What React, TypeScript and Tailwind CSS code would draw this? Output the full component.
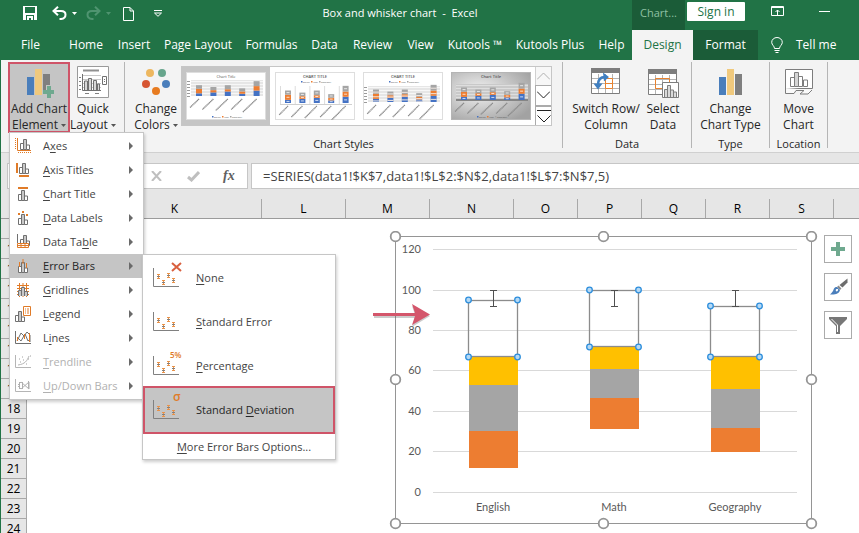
import React from "react";

const UI = "font-['Open_Sans','Noto_Sans',sans-serif]";

function Caret({ className = "" }: { className?: string }) {
  return (
    <svg width="5" height="3" viewBox="0 0 5 3" className={"inline-block align-middle " + className}>
      <path d="M0 0h5L2.500 3z" fill="currentColor" />
    </svg>
  );
}

/* ---------- title bar ---------- */

function TitleBar() {
  return (
    <header className="flex h-[30px] items-center bg-[#217346] text-white">
      <div className="flex w-[168px] shrink-0 items-center pl-[23px]">
        <button aria-label="Save" className="mt-[-4px] w-[14px]">
          <svg width="14" height="14" viewBox="0 0 14 14" className="block">
            <path d="M0 0h14v14H0z" fill="#fff" />
            <path d="M2 1h10v6H2zM3 9h8v5H3z" fill="#217346" />
            <path d="M4 10h6v4H8v-2H6v2H4z" fill="#fff" />
          </svg>
        </button>
        <button aria-label="Undo" className="ml-[15px] mt-[-4px] flex w-[25px] items-center justify-between">
          <svg width="15" height="14" viewBox="0 0 15 14" fill="none" stroke="#fff" strokeWidth="2">
            <path d="M6 0.800 1.500 5 6 9.200M2 5h7c6 0 6 7 0 8H7.500" />
          </svg>
          <Caret />
        </button>
        <button aria-label="Redo" className="ml-[9px] mt-[-4px] flex w-[25px] items-center justify-between text-[#4f9470]">
          <svg width="15" height="14" viewBox="0 0 15 14" fill="none" stroke="currentColor" strokeWidth="2">
            <path d="M9 0.800 13.500 5 9 9.200M13 5H6c-6 0-6 7 0 8h1.500" />
          </svg>
          <Caret />
        </button>
        <button aria-label="New" className="ml-[12px] mt-[-3px]">
          <svg width="11" height="14" viewBox="0 0 11 14" fill="none" stroke="#fff" className="block">
            <path d="M.5.500h6.500l3.500 3.500v9.500H.5zM7 .5V4h3.500" />
          </svg>
        </button>
        <button aria-label="Customize Quick Access Toolbar" className="ml-[20px] mt-[-4px]">
          <svg width="8" height="7" viewBox="0 0 8 7" fill="none" stroke="#fff" className="block">
            <path d="M0 .5h8M.5 3 4 6.300 7.500 3z" />
          </svg>
        </button>
      </div>
      <h1 className="mt-[-4px] flex-1 text-center text-[11px] whitespace-pre">Box and whisker chart  -  Excel</h1>
      <div className="flex h-full w-[53px] items-center justify-center bg-[#1b5c38] pb-1 text-[11px] text-[#8fc0a3]">
        Chart...
      </div>
      <button className="mt-[-7px] ml-[2px] h-[19px] w-[58px] rounded-[1px] bg-white text-xs leading-[19px] text-[#217346]">
        Sign in
      </button>
      <button aria-label="Ribbon display options" className="mt-[-8px] ml-[26px]">
        <svg width="13" height="10" viewBox="0 0 13 10" fill="none" stroke="#fff" className="block">
          <path d="M.5.500h12v9H.5zM0 1.500h13M6.500 9V4M4.500 6l2-2 2 2" />
        </svg>
      </button>
      <button aria-label="Minimize" className="mt-[-7px] mr-[29px] ml-[35px] h-px w-[11px] bg-white" />
    </header>
  );
}

const tabs: [string, string][] = [
  ["File", "w-[61px]"],
  ["Home", "w-[50px]"],
  ["Insert", "w-[46px]"],
  ["Page Layout", "w-[82px]"],
  ["Formulas", "w-[65px]"],
  ["Data", "w-[41px]"],
  ["Review", "w-[55px]"],
  ["View", "w-[41px]"],
  ["Kutools ™", "w-[68px]"],
  ["Kutools Plus", "w-[82px]"],
  ["Help", "w-[41px]"],
  ["Design", "w-[61px] bg-[#f3f3f3] text-[#217346]"],
  ["Format", "w-[65px] bg-[#1b5c38]"],
];

function Tabs() {
  return (
    <nav className="flex h-[30px] bg-[#217346] text-xs text-white">
      {tabs.map(([name, cls]) => (
        <button key={name} className={"shrink-0 whitespace-nowrap " + cls}>
          {name}
        </button>
      ))}
      <button className="ml-[13px] flex items-center gap-[13px] whitespace-nowrap">
        <svg width="12" height="16" viewBox="0 0 12 16" fill="none" stroke="#fff">
          <path d="M3.500 11.500C3.500 9 .7 8 .7 5.300a5.300 4.800 0 0 1 10.600 0C11.300 8 8.500 9 8.500 11.500zM3.500 13.500h5M4.500 15.500h3" />
        </svg>
        Tell me
      </button>
    </nav>
  );
}

/* ---------- ribbon ---------- */

function Columns3({ plus = false }: { plus?: boolean }) {
  return (
    <svg width="30" height="32" viewBox="0 -3 30 32">
      <path d="M3 8h7v18H3z" fill="#4a7ebb" />
      <path d="M11 0h7v26h-7z" fill="#f0c97d" />
      <path d="M19 5h7v21h-7z" fill="#7f7f7f" />
      {plus && (
        <>
          <path d="M22 16h7v5h2v7h-4v2h-7v-3h-2v-6h4z" fill="#c5c5c5" />
          <path d="M23 17h4v4h3v4h-3v4h-4v-4h-4v-4h4z" fill="#6fa98f" />
        </>
      )}
    </svg>
  );
}

function QuickIcon() {
  return (
    <svg width="32" height="32" viewBox="0 0 32 32" fill="none">
      <path d="M.5.500h31v31H.5z" fill="#fff" stroke="#9a9a9a" />
      <path d="M6 4.500h16" stroke="#909090" strokeWidth="2" />
      <path d="M6 9.500h18M6 13.500h18M6 17.500h18M6 21.500h18" stroke="#c9c9c9" />
      <path d="M5.500 8v16.500H24" stroke="#707070" />
      <path d="M7.500 24v-9h3v9M11.500 24V12.500h3V24M16.500 24V14.500h3V24M20.500 24v-6h2v6" fill="#d8d8d8" stroke="#707070" />
      <path d="M2 11.500h2M2 15.500h2M2 19.500h2M2 23.500h2M8 27.500h4M18 27.500h4" stroke="#808080" />
      <path d="M25.500 10.500h4v8h-4z" fill="#fff" stroke="#707070" />
      <path d="M27 13.500h1M27 15.500h1" stroke="#707070" />
    </svg>
  );
}

function ColorsIcon() {
  return (
    <svg width="30" height="32" viewBox="0 -2 30 32">
      <circle cx="9" cy="5" r="4" fill="#edb75f" />
      <circle cx="21" cy="5" r="4" fill="#67a58c" />
      <circle cx="5" cy="16" r="4" fill="#d65532" />
      <circle cx="25" cy="16" r="4" fill="#4a7ebb" />
      <circle cx="15" cy="23" r="4" fill="#e77b20" />
    </svg>
  );
}

function Grid({ orange }: { orange: string }) {
  return (
    <>
      <path d="M1 2h28v23H1z" fill="#fff" />
      <path d="M1 10.500h28M1 15.500h28M1 20.500h28M8.500 6v19M15.500 6v19M22.500 6v19" stroke="#b3b3b3" />
      <path d="M1.500 5v20.500h28V5" stroke="#7d7d7d" />
      <path d="M1 0h29v5H1z" fill="#7d7d7d" />
      <path d={orange} stroke="#e8822e" />
    </>
  );
}

function SwitchIcon() {
  return (
    <svg width="30" height="32" viewBox="1 -2 30 32" fill="none">
      <Grid orange="M15.500 10.500h7v10h-7zM15 15.500h7" />
      <path d="M8 17c0-6 3-8 7-8" stroke="#3f7fc1" strokeWidth="2.500" />
      <path d="m13 4.500 6 4.500-5 4.500zM3.500 15.500l4.500 6 4.500-6z" fill="#3f7fc1" />
    </svg>
  );
}

function SelectIcon() {
  return (
    <svg width="32" height="32" viewBox="0 -3 32 32" fill="none">
      <Grid orange="M8.500 9.500h14v10h-14z" />
      <path d="M15.500 13.500h16v15h-16z" fill="#fff" stroke="#7d7d7d" />
      <path d="M17.500 28v-7.500h3V28M20.500 28V16.500h3V28M23.500 28v-7h3v7M26.500 28v-5h3v5" fill="#dadada" stroke="#7d7d7d" />
    </svg>
  );
}

function MoveIcon() {
  return (
    <svg width="30" height="32" viewBox="0 -3 30 32" fill="none" stroke="#7d7d7d">
      <path d="M1.500.500h27v19h-27z" fill="#fff" />
      <path d="M6.500 17.500v-9h4v9zM14.500 17.500v-10h4v10zM19.500 17.500V11h4v6.500z" fill="#fff" />
      <path d="M10.500 17.500v-14h4v14z" fill="#d5d5d5" />
      <path d="M1.500 19v5.500H10l2-3h8l-4 3.500h8l4-4" fill="#fafafa" />
    </svg>
  );
}

function BigButton(props: { icon: React.ReactNode; a: string; b: string; caret?: boolean; className: string }) {
  return (
    <button className={"flex h-[71px] shrink-0 flex-col items-center whitespace-nowrap " + props.className}>
      <span className="flex h-10 items-center justify-center">{props.icon}</span>
      <span className="block leading-4">{props.a}</span>
      <span className="block leading-4">
        {props.b}
        {props.caret && <Caret className="ml-[3px] text-[#555]" />}
      </span>
    </button>
  );
}

function Group({ label, className, children }: { label?: string; className: string; children: React.ReactNode }) {
  return (
    <section className={"mt-0.5 flex h-[86px] shrink-0 flex-col border-r border-[#b5b5b5] " + className}>
      <div className="flex justify-center">{children}</div>
      {label && <div className="mt-[3px] h-4 text-center text-[11px] leading-4">{label}</div>}
    </section>
  );
}

const bars = [
  [6, 10, 8],
  [8, 5, 7],
  [10, 5, 9],
  [5, 5, 7],
  [12, 10, 11],
];

const labelLengths = [9, 11, 12, 11, 14];

function Thumb({ title, variant }: { title: string; variant: number }) {
  const dark = variant === 3;
  const legendBottom = variant === 0 || dark;
  const base = variant === 0 ? 24 : dark ? 28 : variant === 1 ? 31 : 30;
  const fills = ["#4472c4", "#ed7d31", "#a5a5a5"];
  return (
    <svg width="80" height="48" viewBox="0 0 80 48" className="shrink-0">
      <defs>
        <radialGradient id={"bg" + variant} cx="35%" cy="40%" r="75%">
          <stop offset="0" stopColor={dark ? "#f2f2f2" : "#fff"} />
          <stop offset="1" stopColor={dark ? "#a2a2a2" : "#fff"} />
        </radialGradient>
      </defs>
      <rect x=".5" y=".5" width="79" height="47" fill={"url(#bg" + variant + ")"} stroke={dark ? "#b5b5b5" : "#dedede"} />
      <text x="40" y="6" fontSize="4" textAnchor="middle" fontWeight={variant === 0 ? 400 : 600} fill="#555">
        {title}
      </text>
      {variant !== 1 && <rect x="5" y={base - 16} width="72" height="16" fill={dark ? "#c9c9c9" : "#e6e6e6"} />}
      {[0, 3, 6, 9, 12].map((k) =>
        variant === 1 ? (
          <rect key={k} x={5 + k * 4.900} y="14" width="1" height="18" fill="#dcdcdc" />
        ) : (
          <rect key={k} x="5" y={base - 15 + k} width="72" height="1" fill={dark ? "#dedede" : "#f7f7f7"} />
        )
      )}
      {dark && <rect x="5" y="27" width="72" height="2" fill="#858585" />}
      {variant === 1 && <rect x="5" y="32" width="72" height="1" fill="#d0d0d0" />}
      {(variant === 0 || variant === 2) &&
        [0, 3, 6, 9, 12, 15].map((k) => <rect key={k} x="1" y={base - k} width="3" height="1" fill="#9a9a9a" />)}
      {bars.map((b, i) => {
        const x = 10 + i * 14.400;
        const n = labelLengths[i];
        let y = base;
        return (
          <g key={i}>
            {b.map((v, j) => {
              const h = v * (variant === 0 ? 0.450 : 0.520);
              y -= h;
              return (
                <g key={j}>
                  <rect x={x} y={y} width="6" height={h} fill={fills[j]} />
                  {(variant === 1 || dark) && (
                    <rect x={x + 1.500} y={y + h / 2 - 0.500} width="3" height="1" fill="#fff" opacity=".75" />
                  )}
                  {variant === 2 && <rect x={x} y={y + h / 2} width="6" height="1" fill="#f0e6e0" />}
                </g>
              );
            })}
            <path
              d={`M${x + 3} ${base + 3}l${-n} ${n * (legendBottom ? 0.950 : 1)}`}
              stroke="#8a8a8a"
              strokeWidth="1.400"
              strokeDasharray="1.200 .4"
            />
          </g>
        );
      })}
      {["English", "Math", "Geography"].map((t, i) => (
        <g key={t}>
          <rect x={[26, 36, 44][i]} y={legendBottom ? 44 : 9} width="1.500" height="1.500" fill={fills[i]} />
          <text x={[28, 38, 46][i]} y={legendBottom ? 46 : 11} fontSize="2" fill="#555">
            {t}
          </text>
        </g>
      ))}
    </svg>
  );
}

function Gallery() {
  return (
    <div className="mt-1 mr-1 flex h-[60px] w-[371px] border border-[#c6c6c6] bg-white">
      <div className="flex flex-1 items-center gap-[2px]">
        <button aria-label="Style 1" className="flex h-[58px] w-[88px] items-center justify-center bg-[#c5c5c5]">
          <Thumb title="Chart Title" variant={0} />
        </button>
        <button aria-label="Style 2" className="flex w-[86px] justify-center">
          <Thumb title="CHART TITLE" variant={1} />
        </button>
        <button aria-label="Style 3" className="flex w-[86px] justify-center">
          <Thumb title="CHART TITLE" variant={2} />
        </button>
        <button aria-label="Style 4" className="flex w-[86px] justify-center">
          <Thumb title="Chart Title" variant={3} />
        </button>
      </div>
      <div className="flex w-[16px] flex-col">
        <button aria-label="Scroll up" className="flex flex-1 items-center justify-center border-l border-[#d0d0d0] bg-[#f7f7f7]">
          <svg width="13" height="8" viewBox="0 0 13 8" fill="none" stroke="#b0b0b0">
            <path d="M0 7.500 6.500 1 13 7.500" />
          </svg>
        </button>
        <button aria-label="Scroll down" className="flex flex-1 items-center justify-center border border-r-0 border-[#ababab]">
          <svg width="13" height="8" viewBox="0 0 13 8" fill="none" stroke="#222">
            <path d="M0 .5 6.500 7 13 .5" />
          </svg>
        </button>
        <button aria-label="More styles" className="flex flex-1 items-center justify-center border border-r-0 border-b-0 border-[#ababab]">
          <svg width="14" height="14" viewBox="0 0 14 14" fill="none" stroke="#222">
            <path d="M0 1.500h14M.5 6.500 7 13l6.500-6.500" />
          </svg>
        </button>
      </div>
    </div>
  );
}

function Ribbon() {
  return (
    <div className="relative flex h-[93px] border-b border-[#d0d0d0] bg-[#f3f3f3] pl-[7px] text-xs text-[#262626]">
      <Group className="w-[117px]">
        <BigButton
          icon={<Columns3 plus />}
          a="Add Chart"
          b="Element"
          caret
          className="w-[62px] bg-[#c5c5c5] outline-2 -outline-offset-2 outline-[#cf5468]"
        />
        <BigButton icon={<QuickIcon />} a="Quick" b="Layout" caret className="mr-2 w-[46px]" />
      </Group>
      <Group label="Chart Styles" className="w-[438px]">
        <BigButton icon={<ColorsIcon />} a="Change" b="Colors" caret className="w-[50px]" />
        <Gallery />
      </Group>
      <Group label="Data" className="w-[129px]">
        <BigButton icon={<SwitchIcon />} a="Switch Row/" b="Column" className="w-[74px]" />
        <BigButton icon={<SelectIcon />} a="Select" b="Data" className="mr-0.5 w-[40px]" />
      </Group>
      <Group label="Type" className="w-[78px]">
        <BigButton icon={<Columns3 />} a="Change" b="Chart Type" className="w-[70px]" />
      </Group>
      <Group label="Location" className="w-[58px]">
        <BigButton icon={<MoveIcon />} a="Move" b="Chart" className="w-[50px]" />
      </Group>
      <Menu />
    </div>
  );
}

/* ---------- menus ---------- */

const G = "#707070";
const O = "#e07b28";

const MiniBars = ({ x = 0, y = 0 }: { x?: number; y?: number }) => (
  <g transform={`translate(${x} ${y})`} stroke={G} fill="#fff">
    <path d="M.5 10.500v-6h3v6zM6.500 10.500V6h3v4.500z" />
    <path d="M3.500 10.500V.5h3v10z" fill="#c8c8c8" />
  </g>
);

const icons: Record<string, React.ReactNode> = {
  Axes: (
    <>
      <path d="M2.500 0v12.500H16" stroke={O} />
      <path d="M.5 0v12M3 14.500h13" stroke={O} strokeDasharray="1 1" />
      <MiniBars x={5} y={1} />
    </>
  ),
  "Axis Titles": (
    <>
      <path d="M2 1v10M4 14h10" stroke={O} strokeWidth="2" />
      <MiniBars x={4} y={1} />
    </>
  ),
  "Chart Title": (
    <>
      <path d="M3 2h10" stroke={O} strokeWidth="2" />
      <MiniBars x={3} y={4} />
    </>
  ),
  "Data Labels": (
    <>
      <path d="M3 4h2M7 2h2M11 5h2" stroke={O} strokeWidth="2" />
      <MiniBars x={3} y={4} />
    </>
  ),
  "Data Table": (
    <>
      <path d="M2.500 0v9" stroke={G} />
      <MiniBars x={5} y={1} />
      <path d="M2.500 9.500h11v4h-11zM2 11.500h12M6 9v5M10 9v5" fill="#fff" stroke={O} />
    </>
  ),
  "Error Bars": (
    <>
      <MiniBars x={3} y={4} />
      <path d="M4.500 4v5M8 1v5M11.500 5v5" stroke={O} />
    </>
  ),
  Gridlines: (
    <>
      <path d="M4.500 1v14M8 1v14M11.500 1v14M2 3.500h12M2 6.500h12M2 9.500h12M2 12.500h12" stroke={O} />
      <path d="M3.500 14V8.500h3V14M6.500 14V5.500h3V14M9.500 14V9.500h3V14" stroke={G} fill="#c8c8c8" />
    </>
  ),
  Legend: (
    <>
      <MiniBars x={0} y={5} />
      <path d="M8.500.500h7v9h-7zM10 3h1M12 3h2M10 5h1M12 5h2M10 7h1M12 7h2" stroke={O} fill="#fff" />
    </>
  ),
  Lines: (
    <>
      <path d="M.5 1v12.500H16" stroke={G} />
      <path d="m2 11 4-8 3 3 3-4 3 3v7M2 7l4 4 4-7 3 7 2-2" stroke={G} />
      <path d="M2.500 7v4M9.500 4v5M14.500 3v9" stroke={O} />
    </>
  ),
  Trendline: (
    <>
      <path d="M.5 1v12.500H16M3 11c7-1 9-4 11-9" stroke="#b5b5b5" />
      <path d="M4 5h1M8 6h1M5 8h1M11 10h1M13 5h1M7 3h1M15 2h1" stroke="#a0a0a0" />
    </>
  ),
  "Up/Down Bars": (
    <>
      <path d="M.5 1v12.500H16" stroke="#b5b5b5" />
      <path d="m3 7 3-3 8 7V4l-8 7-3-3M4.500 4v7M7.500 4v7M13.500 3v8" stroke="#b0b0b0" />
    </>
  ),
};

/* label with its access key underlined at index k */
function Key({ text, k }: { text: string; k: number }) {
  return (
    <span className="whitespace-nowrap">
      {text.slice(0, k)}
      <span className="underline underline-offset-2">{text[k]}</span>
      {text.slice(k + 1)}
    </span>
  );
}

const items: [string, number][] = [
  ["Axes", 1],
  ["Axis Titles", 0],
  ["Chart Title", 0],
  ["Data Labels", 0],
  ["Data Table", 7],
  ["Error Bars", 0],
  ["Gridlines", 0],
  ["Legend", 0],
  ["Lines", 1],
  ["Trendline", 0],
  ["Up/Down Bars", 0],
];

function Menu() {
  return (
    <div className="absolute top-[72px] left-2 z-10 w-[135px] border border-[#c6c6c6] bg-white py-px text-[11px] shadow-[1px_2px_3px_rgba(0,0,0,0.2)]">
      {items.map(([name, k], i) => (
        <button
          key={name}
          className={
            "flex h-6 w-full items-center pl-[5px] text-left " +
            (i === 5 ? "bg-[#c5c5c5] text-[#262626]" : i > 8 ? "text-[#b1b1b1]" : "text-[#444]")
          }
        >
          <svg width="16" height="16" viewBox="0 0 16 16" fill="none" className="shrink-0">
            {icons[name]}
          </svg>
          <span className="ml-3 flex-1">
            <Key text={name} k={k} />
          </span>
          <svg width="4" height="8" viewBox="0 0 4 8" className="mr-[10px] shrink-0">
            <path d="M0 0v8l4-4z" fill="#6a6a6a" />
          </svg>
        </button>
      ))}
      <SubMenu />
    </div>
  );
}

const subs: [string, number, string][] = [
  ["None", 0, ""],
  ["Standard Error", 0, ""],
  ["Percentage", 0, "5%"],
  ["Standard Deviation", 9, "σ"],
];

function SubMenu() {
  return (
    <div className="absolute top-[121px] left-[132px] w-[194px] border border-[#c6c6c6] bg-white pt-px shadow-[1px_2px_3px_rgba(0,0,0,0.2)]">
      {subs.map(([name, k, mark], i) => (
        <button
          key={name}
          className={
            "flex w-full items-center pl-[10px] text-left " +
            (i === 3
              ? "-mt-0.5 h-12 bg-[#c5c5c5] text-[#262626] outline-2 -outline-offset-2 outline-[#cf5468]"
              : "h-11 text-[#444]")
          }
        >
          <svg width="32" height="32" viewBox="0 2 32 32" fill="none" className="shrink-0 overflow-visible">
            <path d="M.5 8v18.500H26" stroke="#808080" />
            {[
              [5, 16],
              [10, 22],
              [15, 15],
              [20, 20],
            ].map(([x, y]) => (
              <g key={x}>
                <path d={`M${x - 1} ${y - 1.500}h3M${x - 1} ${y + 2.500}h3M${x + 0.500} ${y - 2}v4`} stroke="#e8924a" />
                <path d={`M${x - 1} ${y + 0.500}h3`} stroke="#808080" />
              </g>
            ))}
            {i === 0 && <path d="m19 3 9 8M28 3l-9 8" stroke="#d9603f" strokeWidth="2" />}
            {mark && (
              <text x={i === 2 ? 17 : 20} y={i === 2 ? 10 : 9} fontSize={i === 2 ? 8 : 12} fontWeight="600" fill={O}>
                {mark}
              </text>
            )}
          </svg>
          <span className="ml-[11px]">
            <Key text={name} k={k} />
          </span>
        </button>
      ))}
      <button className="block h-[25px] w-full pl-[10px] text-center leading-6 text-[#444]">
        <Key text="More Error Bars Options..." k={0} />
      </button>
    </div>
  );
}

/* ---------- formula bar ---------- */

function FormulaBar() {
  return (
    <div className="flex h-[46px] items-start gap-[3px] bg-[#e6e6e6] pt-[10px] pl-[6px]">
      <div className="flex h-[26px] w-[241px] shrink-0 items-center border border-[#c6c6c6] bg-white pl-[143px]">
        <button aria-label="Cancel">
          <svg width="11" height="10" viewBox="0 0 11 10" stroke="#bfbfbf" strokeWidth="2">
            <path d="m1 0 9 10M10 0 1 10" />
          </svg>
        </button>
        <button aria-label="Enter" className="ml-[25px]">
          <svg width="13" height="11" viewBox="0 0 13 11" fill="none" stroke="#bfbfbf" strokeWidth="3">
            <path d="m1 6 3.500 3L12 1" />
          </svg>
        </button>
        <button
          aria-label="Insert function"
          className="ml-[23px] font-['Liberation_Serif',serif] text-[14px] leading-5 font-bold text-[#606060] italic"
        >
          fx
        </button>
      </div>
      <input
        aria-label="Formula"
        readOnly
        value="=SERIES(data1!$K$7,data1!$L$2:$N$2,data1!$L$7:$N$7,5)"
        className="h-[26px] min-w-0 flex-1 border border-r-0 border-[#c6c6c6] bg-white px-[11px] text-[13px] text-[#444]"
      />
    </div>
  );
}

/* ---------- sheet ---------- */

const columns: [string, string][] = [
  ["J", "w-[61px]"],
  ["K", "w-[174px]"],
  ["L", "w-[84px]"],
  ["M", "w-[84px]"],
  ["N", "w-[84px]"],
  ["O", "w-[64px]"],
  ["P", "w-[64px]"],
  ["Q", "w-[64px]"],
  ["R", "w-[64px]"],
  ["S", "w-[64px]"],
];

function Sheet() {
  return (
    <>
      <div className="flex h-5 border-b border-[#9b9b9b] bg-[#e6e6e6] text-xs text-black">
        <div className="w-[26px] shrink-0 border-r border-[#b1b1b1]" />
        {columns.map(([c, w]) => (
          <div key={c} className={"shrink-0 border-r border-[#a8a8a8] text-center leading-[19px] " + w}>
            {c}
          </div>
        ))}
      </div>
      <div className="relative min-h-0 flex-1 overflow-hidden bg-white">
        <div className="w-[26px] text-xs text-black">
          {Array.from({ length: 16 }, (_, i) => (
            <div key={i} className="h-5 border-r border-b border-[#a8a8a8] bg-[#e6e6e6] text-center leading-5">
              {i + 9}
            </div>
          ))}
        </div>
        <Chart />
        <div className="absolute top-[16px] left-[823px] flex flex-col gap-[10px]">
          <SideButton label="Chart Elements">
            <path d="M11 7h4v5h5v4h-5v5h-4v-5H6v-4h5z" fill="#6fa98f" transform="translate(0 -1)" />
          </SideButton>
          <SideButton label="Chart Styles">
            <path d="M22.500 4.500v4l-5 5-3-2.500z" fill="#6d6d6d" />
            <path d="m13.500 11.500 3 3-1.500 1.500-3-3z" fill="#8a8a8a" />
            <path d="M12 13c-3 0-3 2-4 4-1 1.500-2 2.500-3 3.500 5 .5 9-.5 10-4.500z" fill="#4a7ebb" />
            <path d="M11.500 15c-1 .3-1 2 0 2.500 1 0 2-1.500 1.500-2.500z" fill="#fff" />
          </SideButton>
          <SideButton label="Chart Filters">
            <path d="M4 5h18v2l-7 7v8h-4v-8L4 7z" fill="#777" />
            <path d="M6.500 7l6 6V20" stroke="#fff" fill="none" />
          </SideButton>
        </div>
      </div>
    </>
  );
}

function SideButton({ label, children }: { label: string; children: React.ReactNode }) {
  return (
    <button aria-label={label} className="flex size-7 items-center justify-center border border-[#ababab] bg-white">
      <svg width="26" height="26" viewBox="0 0 26 26" className="shrink-0">
        {children}
      </svg>
    </button>
  );
}

const stacks = [
  { name: "English", x: 469, box: [300, 357], y: [357, 385, 431, 468] },
  { name: "Math", x: 590, box: [290, 347], y: [347, 369, 398, 429] },
  { name: "Geography", x: 711, box: [306, 357], y: [357, 389, 428, 452] },
];

function Chart() {
  const colors = ["#ffc000", "#a5a5a5", "#ed7d31"];
  const ticks = [249, 290, 330, 370, 411, 451, 492];
  return (
    <svg
      width="450"
      height="302"
      viewBox="370 231 450 302"
      className="absolute top-[12px] left-[369px] font-['Lato','Open_Sans',sans-serif]"
      fill="none"
    >
      <rect x="395.500" y="236.500" width="416" height="287" fill="#fff" stroke="#959595" />
      {ticks.map((y, i) => (
        <g key={y}>
          <path d={`M433 ${y + 0.500}h364`} stroke="#d9d9d9" />
          <text x="421" y={y + 4} textAnchor="end" fontSize="11" fill="#595959">
            {120 - i * 20}
          </text>
        </g>
      ))}
      {stacks.map((s) => (
        <g key={s.name}>
          {colors.map((c, j) => (
            <rect key={c} x={s.x} y={s.y[j]} width="49" height={s.y[j + 1] - s.y[j]} fill={c} />
          ))}
          <rect x={s.x - 0.500} y={s.box[0] + 0.500} width="49" height={s.box[1] - s.box[0] - 1} stroke="#8c8c8c" strokeWidth="1.300" />
          <path d={`M${s.x + 24.500} 290v16M${s.x + 21} 290.500h7M${s.x + 21} 306.500h7`} stroke="#505050" />
          {[0, 49].map((dx) =>
            s.box.map((y) => (
              <circle key={dx + "-" + y} cx={s.x - 0.500 + dx} cy={y} r="2.800" fill="#b5d9f5" stroke="#2f8fdc" strokeWidth="1.300" />
            ))
          )}
          <text x={s.x + 24} y="511" textAnchor="middle" fontSize="11" fill="#595959">
            {s.name}
          </text>
        </g>
      ))}
      {[395.5, 603.5, 811.5].map((x) =>
        [236.5, 379.5, 523.5].map((y) =>
          x === 603.5 && y === 379.5 ? null : (
            <circle key={x + "-" + y} cx={x} cy={y} r="4.800" fill="#fff" stroke="#959595" strokeWidth="1.800" />
          )
        )
      )}
      <path d="M374 315h41l-3-9 18 10-18 11 3-9h-41z" fill="#555" opacity=".3" />
      <path d="M373 313h42l-3-9 18 10.500-18 10.500 3-9h-42z" fill="#d4566b" />
    </svg>
  );
}

export default function App() {
  return (
    <div className={"flex h-screen flex-col overflow-hidden bg-white " + UI}>
      <TitleBar />
      <Tabs />
      <div className="flex min-h-0 flex-1 flex-col border-l border-[#217346]">
        <Ribbon />
        <FormulaBar />
        <Sheet />
      </div>
    </div>
  );
}
